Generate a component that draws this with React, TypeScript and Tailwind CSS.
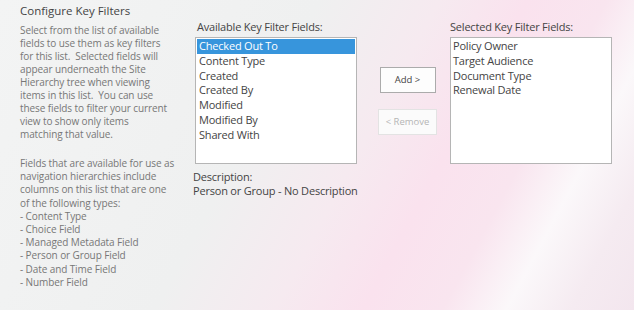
import React from 'react';

const available = ['Checked Out To', 'Content Type', 'Created', 'Created By', 'Modified', 'Modified By', 'Shared With'];
const selected = ['Policy Owner', 'Target Audience', 'Document Type', 'Renewal Date'];

const intro = [
  'Select from the list of available',
  'fields to use them as key filters',
  'for this list.\u00a0 Selected fields will',
  'appear underneath the Site',
  'Hierarchy tree when viewing',
  'items in this list.\u00a0 You can use',
  'these fields to filter your current',
  'view to show only items',
  'matching that value.',
];

const types = [
  'Fields that are available for use as',
  'navigation hierarchies include',
  'columns on this list that are one',
  'of the following types:',
  '- Content Type',
  '- Choice Field',
  '- Managed Metadata Field',
  '- Person or Group Field',
  '- Date and Time Field',
  '- Number Field',
];

const App: React.FC = () => {
  return (
    <div className="relative w-[634px] h-[310px] overflow-hidden bg-[#eff0f0] font-['Open_Sans',sans-serif]">
      {/* pink wash in the background */}
      <div className="absolute inset-0 bg-[linear-gradient(118deg,#f3f4f4_0%,#eff0f0_40%,#f6eaf0_55%,#fae2ee_66%,#f9e5ef_76%,#fbf8fa_84%,#f5ebf1_92%,#f3e6ee_100%)]" />

      <div className="relative flex pt-[3px]">
        {/* left: help text */}
        <div className="w-[193px] pl-[20px] shrink-0">
          <div className="text-[11.5px] leading-[16px] text-[#444]">Configure Key Filters</div>
          <div className="mt-[5px] text-[10px] leading-[13px] text-[#777] tracking-[-0.1px] whitespace-nowrap">
            {intro.map(l => <div key={l}>{l}</div>)}
          </div>
          <div className="mt-[16px] text-[10px] leading-[13.2px] text-[#777] tracking-[-0.1px] whitespace-nowrap">
            {types.map(l => <div key={l}>{l}</div>)}
          </div>
        </div>

        {/* middle: available fields */}
        <div className="w-[164px] shrink-0 pt-[16px]">
          <div className="pl-[4px] text-[11px] leading-[16px] text-[#444] tracking-[-0.2px]">Available Key Filter Fields:</div>
          <div className="ml-[2px] mt-[2px] w-[162px] h-[127px] bg-white border border-[#b5b5b5] p-px">
            {available.map((f, i) => (
              <div
                key={f}
                className={`pl-[2px] text-[11px] leading-[14.8px] tracking-[-0.2px] ${i === 0 ? 'bg-[#3795dc] text-white' : 'text-[#444]'}`}
              >
                {f}
              </div>
            ))}
          </div>
          <div className="mt-[6px] text-[11px] leading-[13.5px] text-[#444] tracking-[-0.2px] whitespace-nowrap">
            Description:
            <br />
            Person or Group - No Description
          </div>
        </div>

        {/* buttons */}
        <div className="w-[93px] shrink-0 flex flex-col items-center pl-[8px] pt-[64px] gap-[16px]">
          <button className="w-[56px] h-[26px] bg-[#fdfdfd] border border-[#ababab] text-[9.5px] text-[#444]">Add &gt;</button>
          <button className="w-[59px] h-[26px] bg-[#fbfbfb] border border-[#e3e3e3] text-[9.5px] text-[#b5b5b5]">&lt; Remove</button>
        </div>

        {/* right: selected fields */}
        <div className="shrink-0 pt-[16px]">
          <div className="text-[11px] leading-[16px] text-[#444] tracking-[-0.2px]">Selected Key Filter Fields:</div>
          <div className="mt-[2px] w-[162px] h-[127px] bg-white border border-[#b5b5b5] p-px">
            {selected.map(f => (
              <div key={f} className="pl-[1px] text-[11px] leading-[14.8px] text-[#444] tracking-[-0.2px]">
                {f}
              </div>
            ))}
          </div>
        </div>
      </div>
    </div>
  );
};

export default App;
